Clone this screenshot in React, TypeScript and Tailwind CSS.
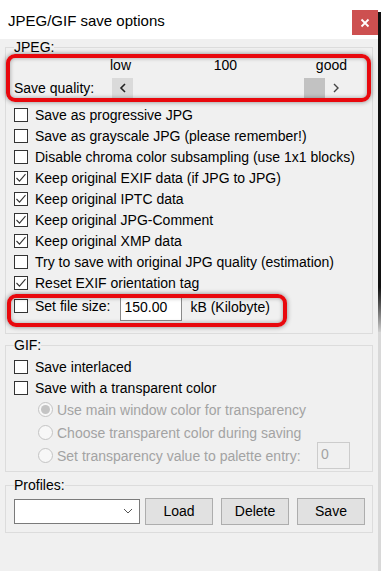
import React from "react";

const Check = ({ checked }: { checked?: boolean }) => (
  <span className="w-[14px] h-[14px] border border-[#333333] bg-white flex items-center justify-center shrink-0">
    {checked && (
      <svg width="12" height="12" viewBox="0 0 12 12">
        <path d="M1.5 6 L4.5 9.2 L10.5 2.2" fill="none" stroke="#333333" strokeWidth="1.1" />
      </svg>
    )}
  </span>
);

const CheckRow = ({ label, checked }: { label: string; checked?: boolean }) => (
  <div className="flex items-center h-[21px] pl-[8px] gap-[7px]">
    <Check checked={checked} />
    <span className="whitespace-nowrap">{label}</span>
  </div>
);

const Radio = ({ checked }: { checked?: boolean }) => (
  <span className="w-[15px] h-[15px] rounded-full border border-[#c4c4c4] bg-[#f7f7f7] flex items-center justify-center shrink-0">
    {checked && <span className="w-[9px] h-[9px] rounded-full bg-[#c4c4c4]" />}
  </span>
);

const RadioRow = ({ label, checked, children }: { label: string; checked?: boolean; children?: React.ReactNode }) => (
  <div className="flex items-center h-[23px] pl-[32px] gap-[4px] text-[#a3a3a3]">
    <Radio checked={checked} />
    <span className="whitespace-nowrap flex-1">{label}</span>
    {children}
  </div>
);

const Btn = ({ label }: { label: string }) => (
  <button className="w-[68px] h-[27px] bg-[#e1e1e1] border border-[#adadad] flex items-center justify-center text-black">
    {label}
  </button>
);

const Highlight = ({ className }: { className: string }) => (
  <div
    className={
      "absolute border-[4px] border-[#e8080d] rounded-[9px] shadow-[0_0_5px_rgba(0,0,0,0.45),inset_0_0_4px_rgba(0,0,0,0.35)] pointer-events-none " +
      className
    }
  />
);

export default function App() {
  return (
    <div className="w-[381px] h-[571px] flex bg-[#f0f0f0] overflow-hidden font-['Liberation_Sans',Arial,sans-serif] text-[14px] leading-[16px] text-black">
      <div className="w-[378px] flex flex-col">
        {/* Title bar */}
        <div className="h-[39px] bg-white flex items-start shrink-0">
          <span className="text-[15px] leading-[18px] mt-[12px] ml-[8px] text-black">JPEG/GIF save options</span>
          <div className="ml-auto mt-[10px] w-[26px] h-[25px] bg-[#cd5050] flex items-center justify-center">
            <svg width="10" height="10" viewBox="0 0 10 10">
              <path d="M1.5 1.5 L8.5 8.5 M8.5 1.5 L1.5 8.5" stroke="white" strokeWidth="1.8" />
            </svg>
          </div>
        </div>

        {/* Body */}
        <div className="flex-1 pl-[5px] flex flex-col overflow-hidden">
          {/* JPEG group */}
          <fieldset className="w-[368px] border border-[#dcdcdc] m-0 px-0 pt-0 pb-[10px] min-w-0">
            <legend className="ml-[8px] p-0 h-[16px] leading-[16px]">JPEG:</legend>
            <div className="relative">
              <Highlight className="-top-[2px] left-0 right-[1px] -bottom-[3px]" />
              <div className="mt-[1px] h-[18px] ml-[104px] w-[237px] flex items-center justify-between">
                <span>low</span>
                <span className="ml-[4px]">100</span>
                <span>good</span>
              </div>
              <div className="mt-[3px] h-[22px] flex items-center pl-[8px]">
                <span className="w-[98px] whitespace-nowrap">Save quality:</span>
                <div className="w-[235px] h-[21px] flex bg-[#f0f0f0]">
                  <div className="w-[21px] h-full bg-[#dadada] flex items-center justify-center">
                    <svg width="8" height="10" viewBox="0 0 8 10">
                      <path d="M6 1 L2 5 L6 9" fill="none" stroke="#222" strokeWidth="1.6" />
                    </svg>
                  </div>
                  <div className="flex-1 h-full bg-[#f0f0f0]" />
                  <div className="w-[21px] h-full bg-[#c2c2c2]" />
                  <div className="w-[22px] h-full flex items-center justify-center">
                    <svg width="8" height="10" viewBox="0 0 8 10">
                      <path d="M2 1 L6 5 L2 9" fill="none" stroke="#444" strokeWidth="1.4" />
                    </svg>
                  </div>
                </div>
              </div>
            </div>
            <div className="mt-[5px] flex flex-col">
              <CheckRow label="Save as progressive JPG" />
              <CheckRow label="Save as grayscale JPG (please remember!)" />
              <CheckRow label="Disable chroma color subsampling (use 1x1 blocks)" />
              <CheckRow label="Keep original EXIF data (if JPG to JPG)" checked />
              <CheckRow label="Keep original IPTC data" checked />
              <CheckRow label="Keep original JPG-Comment" checked />
              <CheckRow label="Keep original XMP data" checked />
              <CheckRow label="Try to save with original JPG quality (estimation)" />
              <CheckRow label="Reset EXIF orientation tag" checked />
            </div>
            <div className="relative h-[30px] flex items-center pl-[8px]">
              <Highlight className="top-[1px] left-[1px] w-[280px] -bottom-[4px]" />
              <div className="flex items-center gap-[7px] pb-[4px]">
                <Check />
                <span className="whitespace-nowrap">Set file size:</span>
              </div>
              <div className="ml-[10px] w-[62px] h-[26px] bg-white border border-[#8a8a8a] flex items-center pl-[3px] pb-[3px] text-[14px]">
                150.00
              </div>
              <span className="ml-[8px] pb-[3px] whitespace-nowrap">kB (Kilobyte)</span>
            </div>
          </fieldset>

          {/* GIF group */}
          <fieldset className="mt-[3px] w-[368px] border border-[#dcdcdc] m-0 px-0 pt-0 pb-[4px] min-w-0">
            <legend className="ml-[8px] p-0 h-[16px] leading-[16px]">GIF:</legend>
            <div className="mt-[3px] flex flex-col">
              <CheckRow label="Save interlaced" />
              <CheckRow label="Save with a transparent color" />
              <RadioRow label="Use main window color for transparency" checked />
              <RadioRow label="Choose transparent color during saving" />
              <RadioRow label="Set transparency value to palette entry:">
                <div className="mr-[22px] w-[33px] h-[27px] border border-[#cccccc] bg-[#f0f0f0] flex items-center pl-[3px] pb-[3px] text-[#a3a3a3] shrink-0">
                  0
                </div>
              </RadioRow>
            </div>
          </fieldset>

          {/* Profiles group */}
          <fieldset className="mt-[5px] w-[368px] border border-[#dcdcdc] m-0 px-0 pt-0 pb-[7px] min-w-0">
            <legend className="ml-[8px] p-0 h-[16px] leading-[16px]">Profiles:</legend>
            <div className="mt-[4px] h-[28px] flex items-center pl-[8px]">
              <div className="w-[126px] h-[25px] bg-white border border-[#7a7a7a] flex items-center justify-end pr-[6px]">
                <svg width="10" height="6" viewBox="0 0 10 6">
                  <path d="M1 1 L5 5 L9 1" fill="none" stroke="#555" strokeWidth="1" />
                </svg>
              </div>
              <div className="ml-[5px] flex gap-[8px]">
                <Btn label="Load" />
                <Btn label="Delete" />
                <Btn label="Save" />
              </div>
            </div>
          </fieldset>
        </div>
      </div>

      {/* Right edge (background outside the window) */}
      <div className="w-[3px] flex flex-col shrink-0">
        <div className="h-[12px] bg-white" />
        <div className="h-[275px] bg-[#111111]" />
        <div className="h-[45px] bg-gradient-to-b from-[#111111] to-[#d0d0d0]" />
        <div className="flex-1 bg-[#d8d8d8]" />
      </div>
    </div>
  );
}
